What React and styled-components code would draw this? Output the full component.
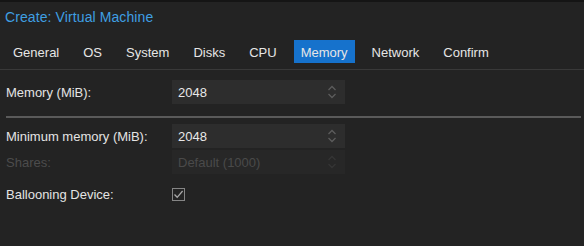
import React from "react";
import styled, { createGlobalStyle } from "styled-components";

const Global = createGlobalStyle`
  html, body { margin: 0; padding: 0; background: #232323; }
  body { font-family: "Liberation Sans", Arial, sans-serif; }
`;

const Window = styled.div`
  width: 584px;
  height: 246px;
  box-sizing: border-box;
  background: #232323;
  border-top: 2px solid #151515;
  display: flex;
  flex-direction: column;
  overflow: hidden;
`;

const Header = styled.div`
  height: 31px;
  box-sizing: border-box;
  padding: 7px 0 0 5px;
  font-size: 14px;
  line-height: 16px;
  letter-spacing: 0.1px;
  color: #3f9fe2;
`;

const TabBar = styled.div`
  display: flex;
  gap: 10px;
  padding: 7px 0 6px 6px;
  border-bottom: 1px solid #393939;
`;

const Tab = styled.div`
  padding: 5px 7px 2px;
  font-size: 13px;
  line-height: 16px;
  color: #e6e6e6;
  background: ${(p) => (p.$active ? "#1672cc" : "transparent")};
`;

const Form = styled.div`
  display: flex;
  flex-direction: column;
  padding: 10px 3px 0 6px;
`;

const Row = styled.div`
  display: flex;
  align-items: center;
  height: 24px;
  margin-bottom: ${(p) => p.$mb ?? 2}px;
`;

const Label = styled.div`
  width: 166px;
  font-size: 13px;
  color: ${(p) => (p.$disabled ? "#4c4c4c" : "#e4e4e4")};
`;

const Field = styled.div`
  width: 173px;
  height: 24px;
  box-sizing: border-box;
  display: flex;
  align-items: center;
  justify-content: space-between;
  padding: 0 8px 0 6px;
  background: ${(p) => (p.$disabled ? "#272727" : "#2d2d2d")};
  font-size: 13px;
  color: ${(p) => (p.$disabled ? "#4a4a4a" : "#e8e8e8")};
`;

const Separator = styled.div`
  height: 2px;
  background: #5a5a5a;
  margin: 12px 0 6px;
`;

const Check = styled.div`
  width: 13px;
  height: 13px;
  box-sizing: border-box;
  border: 1px solid #858585;
  display: flex;
  align-items: center;
  justify-content: center;
`;

const Spinner = ({ color }) => (
  <svg width="10" height="14" viewBox="0 0 10 14">
    <path d="M1.5 5 L5 1.5 L8.5 5" fill="none" stroke={color} strokeWidth="1.3" />
    <path d="M1.5 9 L5 12.5 L8.5 9" fill="none" stroke={color} strokeWidth="1.3" />
  </svg>
);

const tabs = ["General", "OS", "System", "Disks", "CPU", "Memory", "Network", "Confirm"];

export default function App() {
  return (
    <>
      <Global />
      <Window>
        <Header>Create: Virtual Machine</Header>
        <TabBar>
          {tabs.map((t) => (
            <Tab key={t} $active={t === "Memory"}>{t}</Tab>
          ))}
        </TabBar>
        <Form>
          <Row $mb={0}>
            <Label>Memory (MiB):</Label>
            <Field>
              2048
              <Spinner color="#5c5c5c" />
            </Field>
          </Row>
          <Separator />
          <Row>
            <Label>Minimum memory (MiB):</Label>
            <Field>
              2048
              <Spinner color="#5c5c5c" />
            </Field>
          </Row>
          <Row $mb={8}>
            <Label $disabled>Shares:</Label>
            <Field $disabled>
              Default (1000)
              <Spinner color="#353535" />
            </Field>
          </Row>
          <Row>
            <Label>Ballooning Device:</Label>
            <Check>
              <svg width="11" height="11" viewBox="0 0 11 11">
                <path d="M1.5 5.5 L4.2 8.3 L9.6 2" fill="none" stroke="#a8a8a8" strokeWidth="1.3" />
              </svg>
            </Check>
          </Row>
        </Form>
      </Window>
    </>
  );
}
